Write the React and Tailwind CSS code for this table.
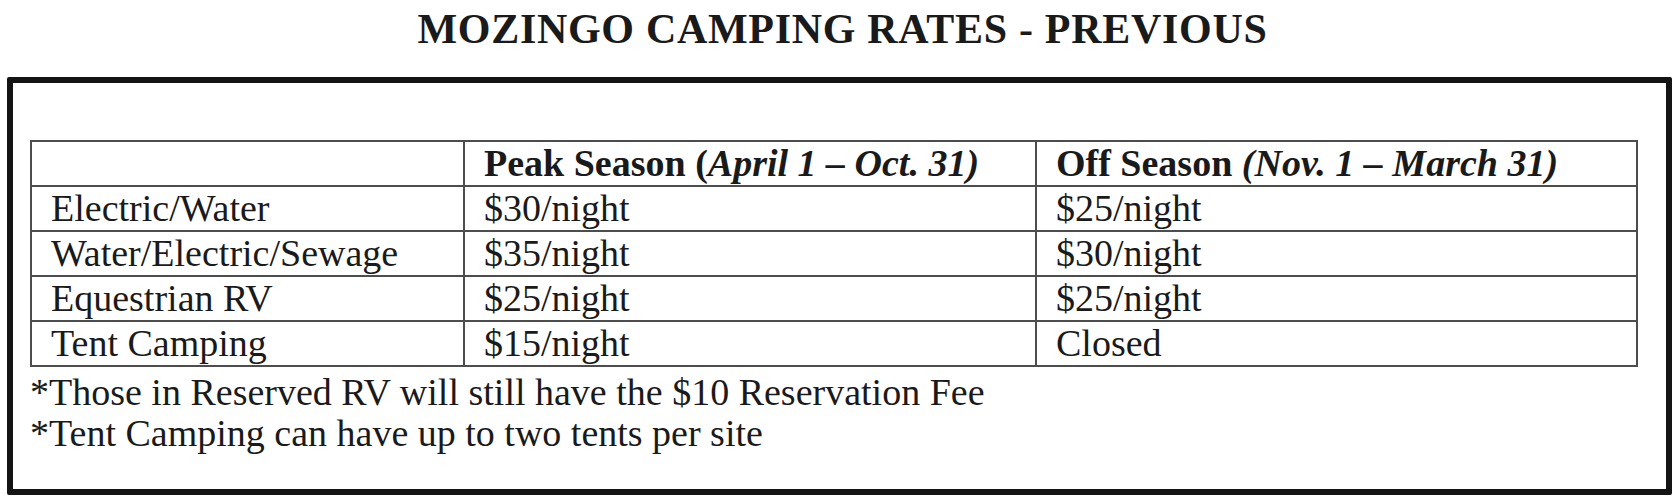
import React from "react";

const rows = [
  ["Electric/Water", "$30/night", "$25/night"],
  ["Water/Electric/Sewage", "$35/night", "$30/night"],
  ["Equestrian RV", "$25/night", "$25/night"],
  ["Tent Camping", "$15/night", "Closed"],
];

function Cell({ children, className = "" }) {
  return (
    <div
      className={
        "h-[43px] box-content border-r-2 border-b-2 border-[#4d4d4d] pl-[19px] leading-[43px] whitespace-nowrap " +
        className
      }
    >
      {children}
    </div>
  );
}

export default function App() {
  return (
    <div
      className="w-[1678px] h-[500px] bg-white text-[#1a1a1a]"
      style={{ fontFamily: '"Liberation Serif", "Times New Roman", serif' }}
    >
      <div className="pt-[8px] pl-[7px] text-center text-[42px] leading-[42px] font-bold tracking-[0.7px]">
        MOZINGO CAMPING RATES - PREVIOUS
      </div>
      <div className="mt-[27px] ml-[7px] w-[1665px] h-[418px] border-[6px] border-[#141414] rounded-[2px]">
        <div className="ml-[17px] mt-[57px] w-[1608px]">
          <div className="grid grid-cols-[433px_572px_1fr] border-l-2 border-t-2 border-[#4d4d4d] text-[38px]">
            <Cell />
            <Cell className="font-bold">
              Peak Season (<span className="italic">April 1 – Oct. 31)</span>
            </Cell>
            <Cell className="font-bold">
              Off Season <span className="italic">(Nov. 1 – March 31)</span>
            </Cell>
            {rows.map((r) => (
              <React.Fragment key={r[0]}>
                <Cell>{r[0]}</Cell>
                <Cell>{r[1]}</Cell>
                <Cell>{r[2]}</Cell>
              </React.Fragment>
            ))}
          </div>
          <div className="mt-[5px] text-[38px] leading-[41px] whitespace-nowrap">
            <p>*Those in Reserved RV will still have the $10 Reservation Fee</p>
            <p>*Tent Camping can have up to two tents per site</p>
          </div>
        </div>
      </div>
    </div>
  );
}
